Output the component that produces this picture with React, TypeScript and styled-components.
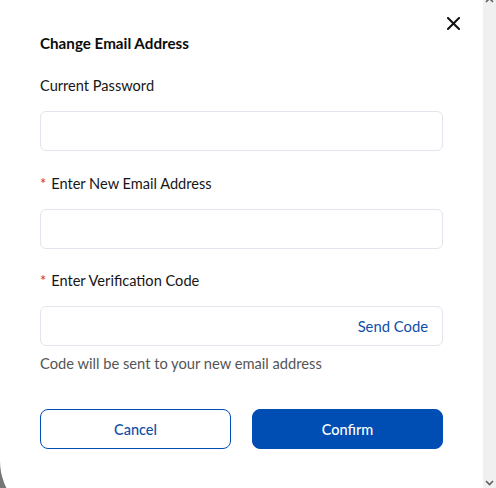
import styled, { createGlobalStyle } from "styled-components";

const GlobalStyle = createGlobalStyle`
  html, body {
    margin: 0;
    padding: 0;
    overflow: hidden;
  }
  body {
    font-family: "Lato", "Noto Sans", sans-serif;
    color: #111;
  }
`;

const BLUE = "#004db3";

const Screen = styled.div`
  display: flex;
  width: 496px;
  height: 488px;
  overflow: hidden;
  background-color: #767676;
`;

const Stage = styled.div`
  flex: 1;
  overflow: hidden;
`;

const Modal = styled.div`
  position: relative;
  height: 521px;
  box-sizing: border-box;
  padding: 33px 40px 0 40px;
  background-color: #fff;
  border-bottom-left-radius: 60px;
  display: flex;
  flex-direction: column;
`;

const CloseButton = styled.button`
  position: absolute;
  top: 15px;
  right: 22px;
  width: 16px;
  height: 16px;
  padding: 0;
  border: none;
  background: none;
  cursor: pointer;
  display: flex;
  align-items: center;
  justify-content: center;
`;

const Title = styled.h2`
  margin: 0 0 23px 0;
  font-size: 15.2px;
  line-height: 20px;
  font-weight: 700;
  color: #0c0c0c;
`;

const Field = styled.div<{ gap?: number }>`
  display: flex;
  flex-direction: column;
  margin-bottom: ${(props) => props.gap ?? 23}px;
`;

const Label = styled.label`
  font-size: 14.6px;
  line-height: 20px;
  color: #161616;
  margin-bottom: 15px;
`;

const Required = styled.span`
  color: #e0262b;
  margin-right: 5px;
`;

const InputBox = styled.div`
  display: flex;
  align-items: center;
  height: 40px;
  box-sizing: border-box;
  border: 1px solid #e4e4ee;
  border-radius: 6px;
  padding: 0 14px;
  background-color: #fff;
`;

const Input = styled.input`
  flex: 1;
  min-width: 0;
  border: none;
  outline: none;
  background: transparent;
  font-family: inherit;
  font-size: 14px;
`;

const SendCode = styled.button`
  border: none;
  background: none;
  padding: 0;
  font-family: inherit;
  font-size: 14.8px;
  color: #0f4fa8;
  cursor: pointer;
`;

const Hint = styled.p`
  margin: 7px 0 0 0;
  font-size: 14.7px;
  line-height: 20px;
  color: #555;
`;

const Actions = styled.div`
  display: grid;
  grid-template-columns: 1fr 1fr;
  column-gap: 21px;
  margin-top: 36px;
`;

const Button = styled.button<{ primary?: boolean }>`
  height: 40px;
  border-radius: 8px;
  font-family: inherit;
  font-size: 14.5px;
  font-weight: 500;
  cursor: pointer;
  padding-bottom: 1px;
  border: 1px solid ${BLUE};
  background-color: ${(props) => (props.primary ? BLUE : "#fff")};
  color: ${(props) => (props.primary ? "#fff" : "#0f4fa8")};
`;

const Scrollbar = styled.div`
  width: 13px;
  background-color: #f0f0f0;
  display: flex;
  flex-direction: column;
  justify-content: space-between;
  align-items: center;
  color: #606060;
`;

const Arrow = styled.svg<{ up?: boolean }>`
  width: 9px;
  height: 6px;
  margin: ${(props) => (props.up ? "-3px 0 0 0" : "0 0 2px 0")};
`;

const Chevron = ({ up }: { up?: boolean }) => (
  <Arrow up={up} viewBox="0 0 9 6">
    <path
      d={up ? "M1 5 L4.5 1.5 L8 5" : "M1 1 L4.5 4.5 L8 1"}
      fill="none"
      stroke="currentColor"
      strokeWidth="1.6"
    />
  </Arrow>
);

const App = () => {
  return (
    <>
      <GlobalStyle />
      <Screen>
        <Stage>
          <Modal>
            <CloseButton aria-label="Close">
              <svg width="13" height="13" viewBox="0 0 13 13">
                <path
                  d="M1 1 L12 12 M12 1 L1 12"
                  stroke="#111"
                  strokeWidth="2"
                  strokeLinecap="square"
                />
              </svg>
            </CloseButton>
            <Title>Change Email Address</Title>
            <Field>
              <Label>Current Password</Label>
              <InputBox>
                <Input type="password" />
              </InputBox>
            </Field>
            <Field gap={22}>
              <Label>
                <Required>*</Required>Enter New Email Address
              </Label>
              <InputBox>
                <Input type="email" />
              </InputBox>
            </Field>
            <Field gap={0}>
              <Label>
                <Required>*</Required>Enter Verification Code
              </Label>
              <InputBox>
                <Input type="text" />
                <SendCode>Send Code</SendCode>
              </InputBox>
              <Hint>Code will be sent to your new email address</Hint>
            </Field>
            <Actions>
              <Button>Cancel</Button>
              <Button primary>Confirm</Button>
            </Actions>
          </Modal>
        </Stage>
        <Scrollbar>
          <Chevron up />
          <Chevron />
        </Scrollbar>
      </Screen>
    </>
  );
};

export default App;
